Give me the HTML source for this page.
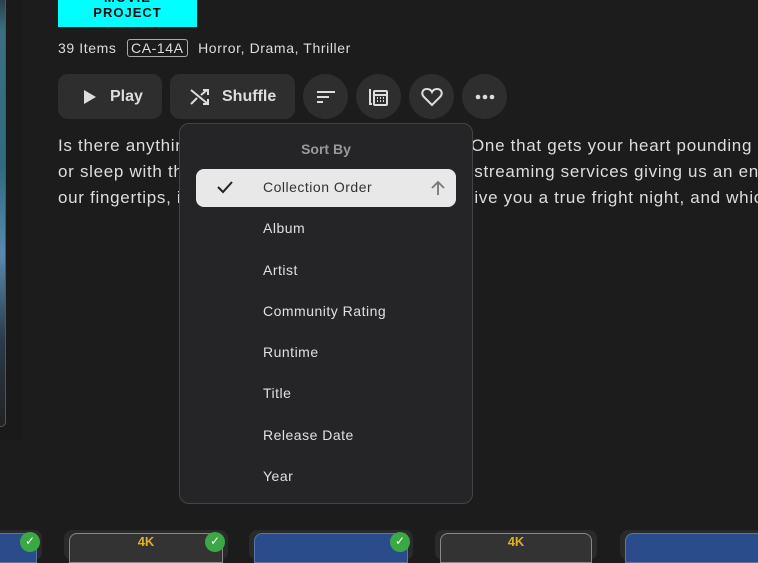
<!DOCTYPE html>
<html><head><style>
*{margin:0;padding:0;box-sizing:border-box}
body{width:758px;height:547px;background:#1c1c1c;overflow:hidden;position:relative;font-family:"Liberation Sans",sans-serif;color:#e8e8e8}
.a{position:absolute}
.btn{position:absolute;top:74px;height:45px;background:#2e2e2e;border-radius:10px;display:flex;align-items:center;font-weight:bold;font-size:16px;color:#ddd}
.circ{position:absolute;top:74px;width:45px;height:45px;border-radius:50%;background:#2e2e2e;display:flex;align-items:center;justify-content:center}
.desc{position:absolute;left:58px;font-size:17px;letter-spacing:0.7px;color:#ddd;white-space:nowrap}
.menu{position:absolute;left:179px;top:123px;width:294px;height:381px;background:#252527;border:1px solid #444;border-radius:10px}
.it{position:absolute;left:83px;font-size:14px;letter-spacing:0.5px;color:#e0e0e0}
.card{position:absolute;top:530px;height:30px;border-radius:8px;background:#2a2a2a}
.in{position:absolute;left:5px;right:5px;top:3px;height:30px;border-radius:8px 8px 0 0;border:1px solid #888}
.chk{position:absolute;top:532px;width:20px;height:20px;border-radius:50%;background:#3aa845;color:#fff;font-size:12px;text-align:center;line-height:18px}
</style></head><body>
<div class="a" style="left:0;top:0;width:22px;height:440px;background:#1a1a1a"></div>
<div class="a" style="left:-6px;top:-5px;width:12px;height:432px;border-radius:5px;border:1px solid #555;background:linear-gradient(#2a3a44 0,#3b6f80 8%,#2f6b80 40%,#5a8ab0 60%,#2a3a4a 80%,#222 100%)"></div>
<div class="a" style="left:58px;top:0;width:139px;height:27px;background:#00ffff;color:#111;font-weight:bold;font-size:13px;text-align:center;overflow:hidden;letter-spacing:1px">
<div class="a" style="left:0;right:0;top:-9px;line-height:13px">MOVIE</div>
<div class="a" style="left:0;right:0;top:6px;line-height:14px">PROJECT</div></div>
<div class="a" style="left:58px;top:40px;font-size:14px;letter-spacing:0.6px;color:#ddd;white-space:nowrap">39 Items <span style="border:1px solid #aaa;border-radius:3px;padding:0 3px;margin:0 6px 0 6px">CA-14A</span> Horror, Drama, Thriller</div>
<div class="btn" style="left:58px;width:104px;padding-left:25px"><svg width="14" height="16" viewBox="0 0 14 16"><path d="M1 1L13 8L1 15Z" fill="#ddd"/></svg><span style="margin-left:13px">Play</span></div>
<div class="btn" style="left:170px;width:125px;padding-left:20px"><svg width="20" height="18" viewBox="0 0 20 18" fill="none" stroke="#ddd" stroke-width="2"><path d="M1 2L18 16M13 16h5v-5M1 16L7 10M11 7L17 2M13 2h5v5"/></svg><span style="margin-left:12px">Shuffle</span></div>
<div class="circ" style="left:303px"><svg width="20" height="14"><path d="M1 2h18M1 7h12M1 12h6" stroke="#ddd" stroke-width="2"/></svg></div>
<div class="circ" style="left:356px"><svg width="22" height="22" fill="none" stroke="#ddd" stroke-width="2"><path d="M2 3v15h2"/><rect x="6" y="5" width="13" height="14" rx="1"/><path d="M6 9h13M9 12h1M12 12h1M15 12h1M9 15h1M12 15h1M15 15h1"/></svg></div>
<div class="circ" style="left:409px"><svg width="22" height="20" viewBox="0 0 22 20"><path d="M11 18L3 10C0 7 1 2 6 2C8 2 10 3 11 5C12 3 14 2 16 2C21 2 22 7 19 10Z" fill="none" stroke="#ddd" stroke-width="2"/></svg></div>
<div class="circ" style="left:462px"><svg width="20" height="6"><circle cx="3" cy="3" r="2.3" fill="#ddd"/><circle cx="10" cy="3" r="2.3" fill="#ddd"/><circle cx="17" cy="3" r="2.3" fill="#ddd"/></svg></div>
<div class="desc" style="top:136px">Is there anything better than a good scary movie? One that gets your heart pounding</div>
<div class="desc" style="top:162px">or sleep with the lights on for days? And now, with streaming services giving us an endless</div>
<div class="desc" style="top:188px">our fingertips, it's hard to know which movies will give you a true fright night, and which a</div>
<div class="menu">
<div class="a" style="left:0;right:0;top:17px;text-align:center;font-weight:bold;font-size:14px;color:#999">Sort By</div>
<div class="a" style="left:16px;top:45px;width:260px;height:38px;background:#e8e8e8;border-radius:8px">
<svg class="a" style="left:21px;top:12px" width="16" height="13"><path d="M1 6l5 5L15 1" fill="none" stroke="#222" stroke-width="2"/></svg>
<div class="a" style="left:67px;top:10px;font-size:14px;letter-spacing:0.5px;color:#333">Collection Order</div>
<svg class="a" style="left:235px;top:11px" width="14" height="16"><path d="M7 15V2M1 8l6-6 6 6" fill="none" stroke="#777" stroke-width="1.8"/></svg>
</div>
<div class="it" style="top:96px">Album</div>
<div class="it" style="top:138px">Artist</div>
<div class="it" style="top:179px">Community Rating</div>
<div class="it" style="top:220px">Runtime</div>
<div class="it" style="top:261px">Title</div>
<div class="it" style="top:303px">Release Date</div>
<div class="it" style="top:344px">Year</div>
</div>
<div class="card" style="left:-20px;width:62px"><div class="in" style="background:#2a4c8a;border-color:#5577aa"></div></div>
<div class="card" style="left:64px;width:164px"><div class="in" style="background:#333;text-align:center;color:#e0b020;font-weight:bold;font-size:13px;line-height:16px">4K</div></div>
<div class="card" style="left:249px;width:164px"><div class="in" style="background:#2a4c8a;border-color:#5577aa"></div></div>
<div class="card" style="left:435px;width:162px"><div class="in" style="background:#333;text-align:center;color:#e0b020;font-weight:bold;font-size:13px;line-height:16px">4K</div></div>
<div class="card" style="left:620px;width:160px"><div class="in" style="background:#2a4c8a;border-color:#5577aa"></div></div>
<div class="chk" style="left:20px">✓</div>
<div class="chk" style="left:205px">✓</div>
<div class="chk" style="left:390px">✓</div>
</body></html>
